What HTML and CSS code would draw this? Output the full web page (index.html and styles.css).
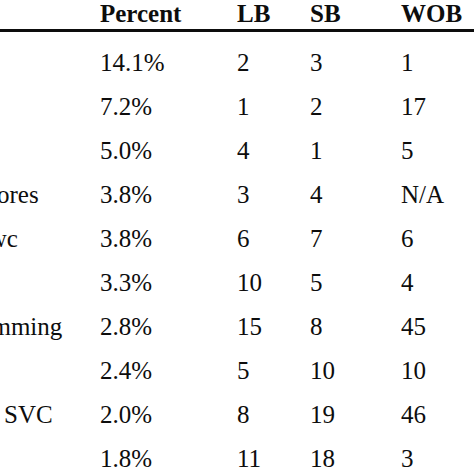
FILE: index.html
```html
<!DOCTYPE html>
<html>
<head>
<meta charset="utf-8">
<link rel="stylesheet" href="styles.css">
</head>
<body>
<table class="data">
  <colgroup>
    <col class="c-label"><col class="c-pct"><col class="c-lb"><col class="c-sb"><col class="c-wob">
  </colgroup>
  <thead>
    <tr><th></th><th>Percent</th><th>LB</th><th>SB</th><th>WOB</th></tr>
  </thead>
  <tbody>
    <tr><td></td><td>14.1%</td><td>2</td><td>3</td><td>1</td></tr>
    <tr><td></td><td>7.2%</td><td>1</td><td>2</td><td>17</td></tr>
    <tr><td></td><td>5.0%</td><td>4</td><td>1</td><td>5</td></tr>
    <tr><td>Grocery Stores</td><td>3.8%</td><td>3</td><td>4</td><td>N/A</td></tr>
    <tr><td>Roofing hwc</td><td>3.8%</td><td>6</td><td>7</td><td>6</td></tr>
    <tr><td></td><td>3.3%</td><td>10</td><td>5</td><td>4</td></tr>
    <tr><td>PC Programming</td><td>2.8%</td><td>15</td><td>8</td><td>45</td></tr>
    <tr><td></td><td>2.4%</td><td>5</td><td>10</td><td>10</td></tr>
    <tr><td>Consulting SVC</td><td>2.0%</td><td>8</td><td>19</td><td>46</td></tr>
    <tr><td></td><td>1.8%</td><td>11</td><td>18</td><td>3</td></tr>
  </tbody>
</table>
</body>
</html>
```

FILE: styles.css
```css
html, body {
  margin: 0;
  padding: 0;
  background: #fff;
  overflow: hidden;
}
body {
  width: 474px;
  height: 474px;
  font-family: "Liberation Serif", "Times New Roman", serif;
  font-size: 25px;
  color: #0d0d0d;
}
.data {
  border-collapse: collapse;
  table-layout: fixed;
  width: 640px;
  margin-left: -112px;
}
.c-label { width: 212px; }
.c-pct { width: 137px; }
.c-lb { width: 73px; }
.c-sb { width: 91px; }
.c-wob { width: 127px; }
.data th {
  font-weight: bold;
  text-align: left;
  padding: 0 0 1px 0;
  line-height: 28px;
  border-bottom: 3px solid #0d0d0d;
}
.data td {
  text-align: left;
  padding: 0;
  line-height: 44px;
  white-space: nowrap;
}
.data tbody tr:first-child td {
  padding-top: 9px;
}
```
